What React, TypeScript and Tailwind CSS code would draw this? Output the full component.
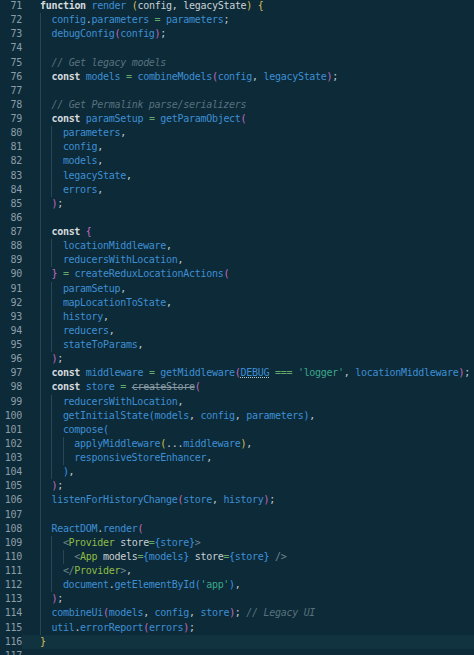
import React from "react";

type Tok = [string, string];

const K = "text-[#d6dbde] font-bold";
const B = "text-[#3d8fd4]";
const W = "text-[#c3cbcf]";
const PR = "text-[#c9d0d4]";
const G = "text-[#62a86a]";
const Y = "text-[#d6c052]";
const PK = "text-[#c66cc0]";
const BL = "text-[#3a95e6]";
const C = "text-[#58717e] italic";
const S = "text-[#3ca78a]";
const T = "text-[#8dbd45]";
const A = "text-[#6f8893]";
const ST = "text-[#8798a0] line-through";
const DB = "text-[#3d8fd4] underline decoration-dotted decoration-[#c3cbcf]";
const SP = "";

type Line = { n: number; indent: number; toks: Tok[] };

const sp: Tok = [SP, " "];

const lines: Line[] = [
  { n: 71, indent: 0, toks: [[K, "function"], sp, [B, "render"], sp, [Y, "("], [PR, "config"], [W, ", "], [PR, "legacyState"], [Y, ")"], sp, [Y, "{"]] },
  { n: 72, indent: 1, toks: [[B, "config"], [W, "."], [B, "parameters"], sp, [G, "="], sp, [B, "parameters"], [W, ";"]] },
  { n: 73, indent: 1, toks: [[B, "debugConfig"], [PK, "("], [B, "config"], [PK, ")"], [W, ";"]] },
  { n: 74, indent: 1, toks: [] },
  { n: 75, indent: 1, toks: [[C, "// Get legacy models"]] },
  { n: 76, indent: 1, toks: [[K, "const"], sp, [B, "models"], sp, [G, "="], sp, [B, "combineModels"], [PK, "("], [B, "config"], [W, ", "], [B, "legacyState"], [PK, ")"], [W, ";"]] },
  { n: 77, indent: 1, toks: [] },
  { n: 78, indent: 1, toks: [[C, "// Get Permalink parse/serializers"]] },
  { n: 79, indent: 1, toks: [[K, "const"], sp, [B, "paramSetup"], sp, [G, "="], sp, [B, "getParamObject"], [PK, "("]] },
  { n: 80, indent: 2, toks: [[B, "parameters"], [W, ","]] },
  { n: 81, indent: 2, toks: [[B, "config"], [W, ","]] },
  { n: 82, indent: 2, toks: [[B, "models"], [W, ","]] },
  { n: 83, indent: 2, toks: [[B, "legacyState"], [W, ","]] },
  { n: 84, indent: 2, toks: [[B, "errors"], [W, ","]] },
  { n: 85, indent: 1, toks: [[PK, ")"], [W, ";"]] },
  { n: 86, indent: 1, toks: [] },
  { n: 87, indent: 1, toks: [[K, "const"], sp, [PK, "{"]] },
  { n: 88, indent: 2, toks: [[B, "locationMiddleware"], [W, ","]] },
  { n: 89, indent: 2, toks: [[B, "reducersWithLocation"], [W, ","]] },
  { n: 90, indent: 1, toks: [[PK, "}"], sp, [G, "="], sp, [B, "createReduxLocationActions"], [PK, "("]] },
  { n: 91, indent: 2, toks: [[B, "paramSetup"], [W, ","]] },
  { n: 92, indent: 2, toks: [[B, "mapLocationToState"], [W, ","]] },
  { n: 93, indent: 2, toks: [[B, "history"], [W, ","]] },
  { n: 94, indent: 2, toks: [[B, "reducers"], [W, ","]] },
  { n: 95, indent: 2, toks: [[B, "stateToParams"], [W, ","]] },
  { n: 96, indent: 1, toks: [[PK, ")"], [W, ";"]] },
  { n: 97, indent: 1, toks: [[K, "const"], sp, [B, "middleware"], sp, [G, "="], sp, [B, "getMiddleware"], [PK, "("], [DB, "DEBUG"], sp, [G, "==="], sp, [S, "'logger'"], [W, ", "], [B, "locationMiddleware"], [PK, ")"], [W, ";"]] },
  { n: 98, indent: 1, toks: [[K, "const"], sp, [B, "store"], sp, [G, "="], sp, [ST, "createStore"], [PK, "("]] },
  { n: 99, indent: 2, toks: [[B, "reducersWithLocation"], [W, ","]] },
  { n: 100, indent: 2, toks: [[B, "getInitialState"], [BL, "("], [B, "models"], [W, ", "], [B, "config"], [W, ", "], [B, "parameters"], [BL, ")"], [W, ","]] },
  { n: 101, indent: 2, toks: [[B, "compose"], [BL, "("]] },
  { n: 102, indent: 3, toks: [[B, "applyMiddleware"], [Y, "("], [W, "..."], [B, "middleware"], [Y, ")"], [W, ","]] },
  { n: 103, indent: 3, toks: [[B, "responsiveStoreEnhancer"], [W, ","]] },
  { n: 104, indent: 2, toks: [[BL, ")"], [W, ","]] },
  { n: 105, indent: 1, toks: [[PK, ")"], [W, ";"]] },
  { n: 106, indent: 1, toks: [[B, "listenForHistoryChange"], [PK, "("], [B, "store"], [W, ", "], [B, "history"], [PK, ")"], [W, ";"]] },
  { n: 107, indent: 1, toks: [] },
  { n: 108, indent: 1, toks: [[B, "ReactDOM"], [W, "."], [B, "render"], [PK, "("]] },
  { n: 109, indent: 2, toks: [[A, "<"], [T, "Provider"], sp, [PR, "store"], [G, "="], [BL, "{"], [B, "store"], [BL, "}"], [A, ">"]] },
  { n: 110, indent: 3, toks: [[A, "<"], [T, "App"], sp, [PR, "models"], [G, "="], [BL, "{"], [B, "models"], [BL, "}"], sp, [PR, "store"], [G, "="], [BL, "{"], [B, "store"], [BL, "}"], sp, [A, "/>"]] },
  { n: 111, indent: 2, toks: [[A, "</"], [T, "Provider"], [A, ">"], [W, ","]] },
  { n: 112, indent: 2, toks: [[B, "document"], [W, "."], [B, "getElementById"], [BL, "("], [S, "'app'"], [BL, ")"], [W, ","]] },
  { n: 113, indent: 1, toks: [[PK, ")"], [W, ";"]] },
  { n: 114, indent: 1, toks: [[B, "combineUi"], [PK, "("], [B, "models"], [W, ", "], [B, "config"], [W, ", "], [B, "store"], [PK, ")"], [W, ";"], sp, [C, "// Legacy UI"]] },
  { n: 115, indent: 1, toks: [[B, "util"], [W, "."], [B, "errorReport"], [PK, "("], [B, "errors"], [PK, ")"], [W, ";"]] },
  { n: 116, indent: 0, toks: [[Y, "}"]] },
  { n: 117, indent: 0, toks: [] },
];

export default function App() {
  return (
    <div className="h-[655px] w-[474px] overflow-hidden bg-[#0d2a38] font-['DejaVu_Sans_Mono',monospace] text-[10px] tracking-[-0.29px]">
      <div className="mt-[-1px] flex flex-col">
        {lines.map((l) => (
          <div
            key={l.n}
            className={
              "flex h-[14.13px] items-stretch leading-[14.13px] " +
              (l.n === 116 ? "bg-[#113340]" : "")
            }
          >
            <div className="w-[22px] shrink-0 bg-[#0d2a38] text-right text-[#8b9ea8]">{l.n}</div>
            <div className="ml-[18px] flex items-stretch whitespace-pre">
              {Array.from({ length: l.indent }).map((_, i) => (
                <span key={i} className="w-[11.44px] shrink-0 border-l border-[#274656]" />
              ))}
              <span>
                {l.toks.map((t, i) => (
                  <span key={i} className={t[0] || "text-[#c3cbcf]"}>
                    {t[1]}
                  </span>
                ))}
              </span>
            </div>
          </div>
        ))}
      </div>
    </div>
  );
}
